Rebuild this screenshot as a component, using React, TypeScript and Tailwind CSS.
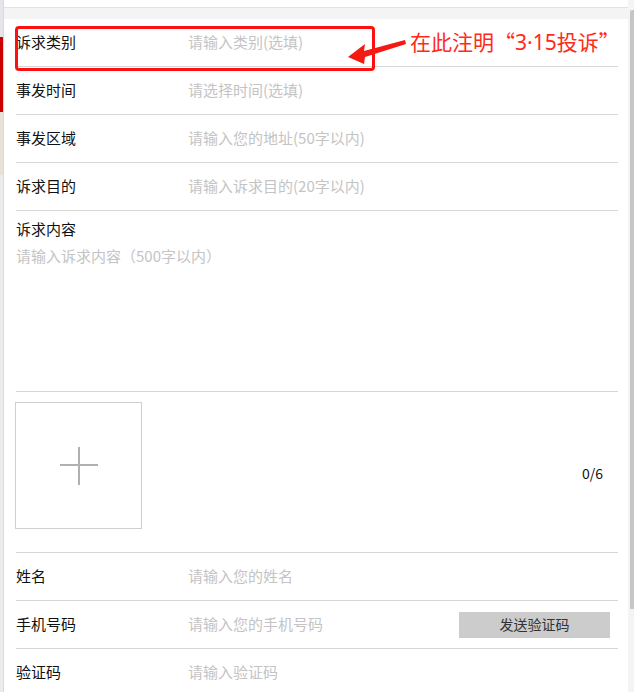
import React from "react";

const font = { fontFamily: '"Noto Sans CJK SC", "Noto Sans", sans-serif' };

function Row({ label, placeholder, children }: { label: string; placeholder: string; children?: React.ReactNode }) {
  return (
    <div className="flex shrink-0 items-center h-[48px] border-b border-[#d6d6d6]">
      <div className="w-[172px] text-[15px] text-[#111]">{label}</div>
      <div className="flex-1 text-[15px] text-[#c4c4c4]">{placeholder}</div>
      {children}
    </div>
  );
}

export default function App() {
  return (
    <div className="relative flex w-[634px] h-[692px] overflow-hidden bg-white" style={font}>
      {/* left strip */}
      <div className="flex flex-col w-[3px] shrink-0">
        <div className="h-[37px] bg-[#e6e6ea]" />
        <div className="h-[75px] bg-[#cc0000]" />
        <div className="h-[63px] bg-[#e6e2d6]" />
        <div className="flex-1 bg-[#ececec]" />
      </div>
      <div className="w-px shrink-0 bg-[#dadada]" />

      {/* main panel */}
      <div className="flex-1 flex flex-col">
        <div className="h-[8px] shrink-0 border-b border-[#e2e2e2] bg-white" />
        <div className="h-[11px] shrink-0 bg-[#f4f4f4]" />
        <div className="ml-3 mr-[10px] flex flex-col shrink-0">
          <Row label="诉求类别" placeholder="请输入类别(选填)" />
          <Row label="事发时间" placeholder="请选择时间(选填)" />
          <Row label="事发区域" placeholder="请输入您的地址(50字以内)" />
          <Row label="诉求目的" placeholder="请输入诉求目的(20字以内)" />

          <div className="h-[181px] shrink-0 border-b border-[#d6d6d6] pt-[8px]">
            <div className="text-[15px] text-[#111] leading-[20px]">诉求内容</div>
            <div className="mt-[7px] text-[15px] text-[#c4c4c4] leading-[20px]">请输入诉求内容（500字以内）</div>
          </div>

          <div className="h-[161px] shrink-0 border-b border-[#d6d6d6] flex items-start pt-[10px]">
            <div className="w-[127px] h-[127px] -ml-px border border-[#cfcfcf] flex items-center justify-center">
              <svg width="38" height="38" viewBox="0 0 38 38">
                <rect x="0" y="17" width="38" height="2" fill="#b0b0b0" />
                <rect x="18" y="0" width="2" height="38" fill="#b0b0b0" />
              </svg>
            </div>
            <div className="flex-1 flex justify-end pr-[15px] pt-[61px] text-[14px] text-[#111]">0/6</div>
          </div>

          <Row label="姓名" placeholder="请输入您的姓名" />
          <Row label="手机号码" placeholder="请输入您的手机号码">
            <button className="w-[151px] h-[26px] mr-[8px] bg-[#cccccc] text-[14px] text-[#333]">发送验证码</button>
          </Row>
          <Row label="验证码" placeholder="请输入验证码" />
        </div>
      </div>

      {/* right scrollbar */}
      <div className="w-[6px] shrink-0 bg-[#f4f4f4] flex justify-end">
        <div className="w-[4px] h-[599px] mt-[10px] bg-[#c6c6c9] rounded-tl-[2px]" />
      </div>

      {/* annotation overlay */}
      <div className="absolute left-[15px] top-[26px] w-[360px] h-[45px] border-[3px] border-[#ff1010] rounded-[4px]" />
      <svg className="absolute left-0 top-0" width="634" height="692" viewBox="0 0 634 692">
        <path d="M348 57 L365 44 L364 51 L405 40 L406 44 L365 57 L364 64 Z" fill="#f41a12" />
      </svg>
      <div className="absolute left-[410px] top-[27px] text-[21px] leading-[28px] text-[#ff2a1a] whitespace-nowrap">
        在此注明“<span style={{ fontFamily: '"Noto Sans", sans-serif' }}>3·15</span>投诉”
      </div>
    </div>
  );
}
